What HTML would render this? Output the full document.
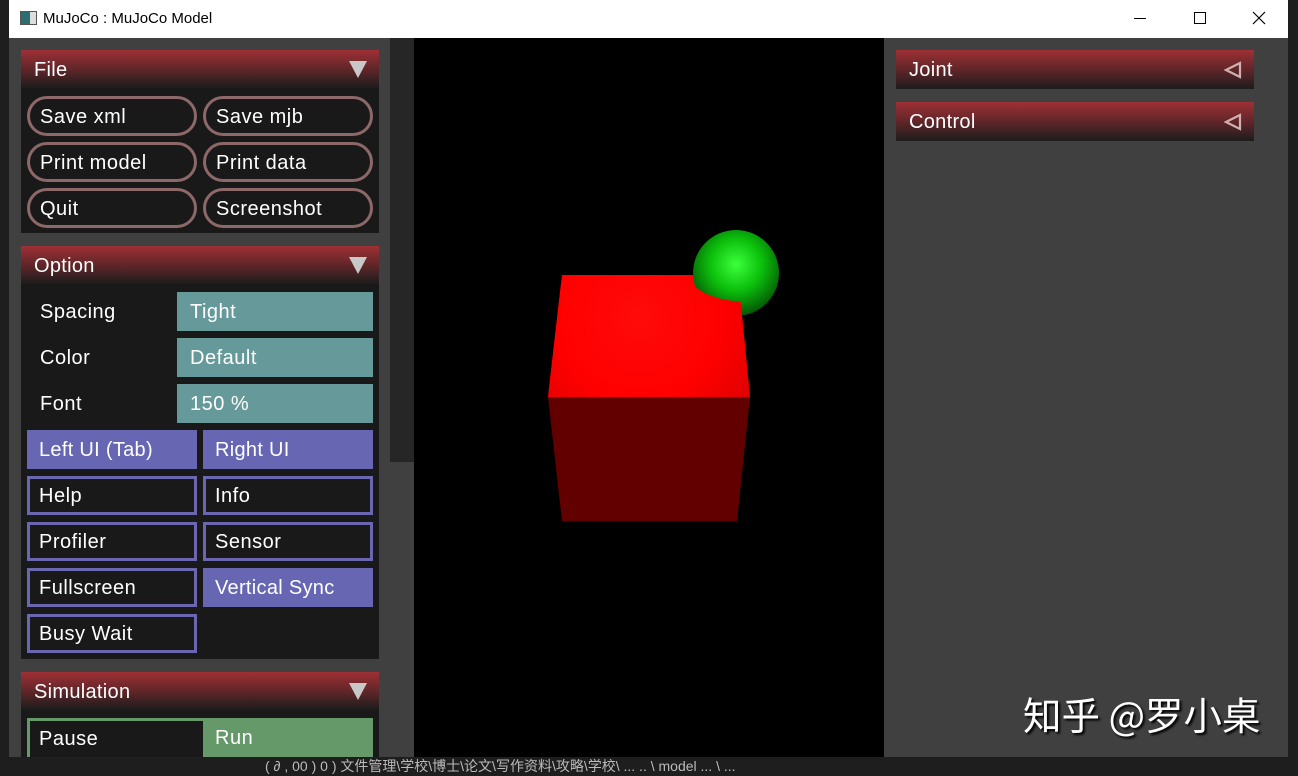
<!DOCTYPE html>
<html><head><meta charset="utf-8"><style>
*{margin:0;padding:0;box-sizing:border-box}
body{width:1298px;height:767px;background:#1e1e1e;position:relative;overflow:hidden;font-family:"Liberation Sans","Noto Sans CJK SC",sans-serif;color:#fff}
.a{position:absolute}
.title{left:9px;top:0;width:1279px;height:38px;background:#fff;color:#000;font-size:15px}
.hdr{background:linear-gradient(#9e3035,#5a2528 55%,#1c1c1c);font-size:20px;line-height:40px;padding-left:13px;letter-spacing:.3px}
.body{background:#191919}
.pill{border:3px solid #8c6868;border-radius:20px;background:#191919;font-size:20px;line-height:36px;padding-left:10px;letter-spacing:.5px}
.teal{background:#669999;font-size:20px;line-height:41px;padding-left:13px;letter-spacing:.5px}
.lab{font-size:20px;line-height:41px;letter-spacing:.5px}
.pur{background:#6666b3;font-size:20px;line-height:41px;padding-left:12px;letter-spacing:.3px}
.out{border:3px solid #6a66b0;background:#191919;font-size:20px;line-height:35px;padding-left:9px;letter-spacing:.5px}
.tri{position:absolute;right:12px;top:11px;width:0;height:0;border-left:9px solid transparent;border-right:9px solid transparent;border-top:17px solid #c8c8c8}
</style></head><body>
<div class="a" style="left:0;top:0;width:9px;height:767px;background:#1e1e1e"></div>
<div class="a title">
 <div class="a" style="left:11px;top:11px;width:17px;height:14px;border:1px solid #555;background:linear-gradient(90deg,#2c6e70 60%,#ddd 60%)"></div>
 <div class="a" style="left:34px;top:10px;font-family:'Liberation Sans',sans-serif">MuJoCo : MuJoCo Model</div>
 <div class="a" style="left:1125px;top:18px;width:12px;height:1px;background:#000"></div>
 <div class="a" style="left:1185px;top:12px;width:12px;height:12px;border:1px solid #000"></div>
 <svg class="a" style="left:1243px;top:11px" width="14" height="14"><path d="M1 1L13 13M13 1L1 13" stroke="#000" stroke-width="1.2"/></svg>
</div>
<div class="a" style="left:9px;top:38px;width:381px;height:719px;background:#404040"></div>
<div class="a" style="left:390px;top:38px;width:24px;height:719px;background:#404040"></div>
<div class="a" style="left:390px;top:38px;width:24px;height:424px;background:#262626"></div>
<div class="a hdr" style="left:21px;top:50px;width:358px;height:38px">File<div class="tri"></div></div>
<div class="a body" style="left:21px;top:88px;width:358px;height:145px"></div>
<div class="a pill" style="left:27px;top:96px;width:170px;height:40px">Save xml</div>
<div class="a pill" style="left:203px;top:96px;width:170px;height:40px">Save mjb</div>
<div class="a pill" style="left:27px;top:142px;width:170px;height:40px">Print model</div>
<div class="a pill" style="left:203px;top:142px;width:170px;height:40px">Print data</div>
<div class="a pill" style="left:27px;top:188px;width:170px;height:40px">Quit</div>
<div class="a pill" style="left:203px;top:188px;width:170px;height:40px">Screenshot</div>
<div class="a hdr" style="left:21px;top:246px;width:358px;height:38px">Option<div class="tri"></div></div>
<div class="a body" style="left:21px;top:284px;width:358px;height:375px"></div>
<div class="a lab" style="left:40px;top:292px">Spacing</div>
<div class="a teal" style="left:177px;top:292px;width:196px;height:39px">Tight</div>
<div class="a lab" style="left:40px;top:338px">Color</div>
<div class="a teal" style="left:177px;top:338px;width:196px;height:39px">Default</div>
<div class="a lab" style="left:40px;top:384px">Font</div>
<div class="a teal" style="left:177px;top:384px;width:196px;height:39px">150 %</div>
<div class="a pur" style="left:27px;top:430px;width:170px;height:39px">Left UI (Tab)</div>
<div class="a pur" style="left:203px;top:430px;width:170px;height:39px">Right UI</div>
<div class="a out" style="left:27px;top:476px;width:170px;height:39px">Help</div>
<div class="a out" style="left:203px;top:476px;width:170px;height:39px">Info</div>
<div class="a out" style="left:27px;top:522px;width:170px;height:39px">Profiler</div>
<div class="a out" style="left:203px;top:522px;width:170px;height:39px">Sensor</div>
<div class="a out" style="left:27px;top:568px;width:170px;height:39px">Fullscreen</div>
<div class="a pur" style="left:203px;top:568px;width:170px;height:39px">Vertical Sync</div>
<div class="a out" style="left:27px;top:614px;width:170px;height:39px">Busy Wait</div>
<div class="a hdr" style="left:21px;top:672px;width:358px;height:38px">Simulation<div class="tri"></div></div>
<div class="a body" style="left:21px;top:710px;width:358px;height:47px"></div>
<div class="a" style="left:27px;top:718px;width:346px;height:39px;background:#66996a"></div>
<div class="a" style="left:30px;top:721px;width:173px;height:36px;background:#191919;font-size:20px;line-height:36px;padding-left:9px;letter-spacing:.5px">Pause</div>
<div class="a" style="left:215px;top:718px;font-size:20px;line-height:41px;letter-spacing:.5px">Run</div>
<div class="a" style="left:414px;top:38px;width:470px;height:719px;background:#000"></div>
<svg class="a" style="left:414px;top:38px" width="470" height="719">
 <defs>
  <radialGradient id="rt" gradientUnits="userSpaceOnUse" cx="225" cy="280" r="150"><stop offset="0" stop-color="#ff0a0a"/><stop offset="0.55" stop-color="#f00"/><stop offset="1" stop-color="#d80000"/></radialGradient>
  <radialGradient id="gs" cx="0.5" cy="0.4" r="0.6"><stop offset="0" stop-color="#3cff3c"/><stop offset="0.5" stop-color="#0cc00c"/><stop offset="1" stop-color="#045504"/></radialGradient>
  <clipPath id="cf"><polygon points="148,237 324,237 336,359 134,359"/></clipPath>
 </defs>
 <polygon points="134,359 336,359 323,483 148,483" fill="#620000"/>
 <polygon points="148,237 324,237 336,359 134,359" fill="url(#rt)"/>
 <circle cx="322" cy="235" r="43" fill="url(#gs)"/>
 <path clip-path="url(#cf)" d="M276,244 Q292,262 330,264 L340,359 L120,359 L120,244 Z" fill="url(#rt)"/>
</svg>
<div class="a" style="left:884px;top:38px;width:404px;height:719px;background:#404040"></div>
<div class="a hdr" style="left:896px;top:50px;width:358px;height:39px">Joint<svg class="a" style="right:12px;top:11px" width="18" height="18"><path d="M16 2L2 9L16 16Z" fill="none" stroke="#d0b0b0" stroke-width="2.2"/></svg></div>
<div class="a hdr" style="left:896px;top:102px;width:358px;height:39px">Control<svg class="a" style="right:12px;top:11px" width="18" height="18"><path d="M16 2L2 9L16 16Z" fill="none" stroke="#d0b0b0" stroke-width="2.2"/></svg></div>
<div class="a" style="left:1023px;top:686px;font-size:38.5px;font-family:'Noto Sans CJK SC',sans-serif;color:#fff;text-shadow:2px 2px 2px #000;white-space:nowrap">知乎 @罗小桌</div>
<div class="a" style="left:1288px;top:0;width:10px;height:767px;background:#1e1e1e"></div>
<div class="a" style="left:265px;top:756px;font-size:14px;color:#bbb;white-space:nowrap">( ∂ , 00 ) 0 ) 文件管理\学校\博士\论文\写作资料\攻略\学校\ ... .. \ model ... \ ...</div>
</body></html>
